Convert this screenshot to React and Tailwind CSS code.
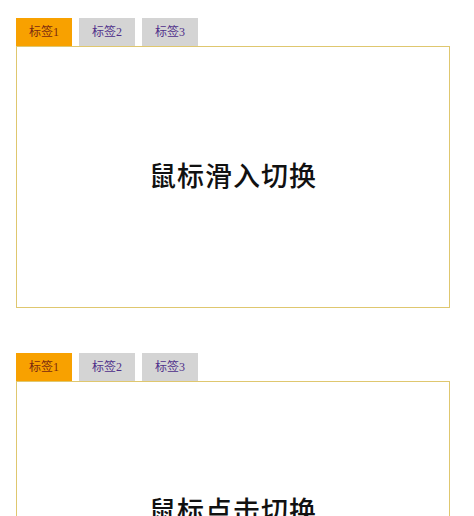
import React, { useState } from 'react';

const tabs = ['标签1', '标签2', '标签3'];

const TabBox = ({ label, mode }) => {
  const [active, setActive] = useState(0);

  return (
    <div className="w-[434px]">
      <div className="flex gap-[7px] h-[28px]">
        {tabs.map((t, i) => (
          <div
            key={t}
            onMouseEnter={mode === 'hover' ? () => setActive(i) : undefined}
            onClick={mode === 'click' ? () => setActive(i) : undefined}
            className={
              'w-[56px] h-[28px] flex items-center justify-center text-[12px] cursor-pointer ' +
              (active === i ? 'bg-[#f8a100] text-[#7a2a10]' : 'bg-[#d4d4d4] text-[#4f2f8a]')
            }
          >
            {t}
          </div>
        ))}
      </div>
      <div className="h-[262px] border border-[#dfc76f] flex items-center justify-center">
        <span className="text-[27px] font-medium text-[#111] tracking-[1px]">{label}</span>
      </div>
    </div>
  );
};

export default function App() {
  return (
    <div
      className="w-[474px] h-[516px] overflow-hidden bg-white pl-[16px] pt-[18px] flex flex-col gap-[45px]"
      style={{ fontFamily: '"Liberation Serif", "Noto Sans CJK SC", serif' }}
    >
      <TabBox label="鼠标滑入切换" mode="hover" />
      <TabBox label="鼠标点击切换" mode="click" />
    </div>
  );
}
